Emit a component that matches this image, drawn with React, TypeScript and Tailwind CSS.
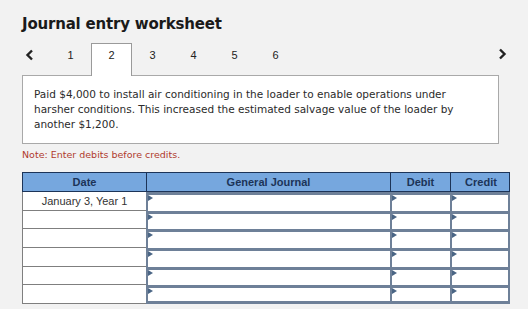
const tabs = [1, 2, 3, 4, 5, 6];
const rows = ['January 3, Year 1', '', '', '', '', ''];

const Arrow = () => (
  <span className="absolute left-0 top-0 w-0 h-0 border-y-[3px] border-y-transparent border-l-[5px] border-l-[#4a6585]"></span>
);

const InputCell = ({ last, right }: { last: boolean; right?: boolean }) => (
  <div
    className={`relative bg-white border-t-[3px] border-l-[2px] border-[#6e8098] ${last ? 'border-b-[3px]' : ''} ${right ? 'border-r-[2px]' : ''}`}
  >
    <Arrow />
  </div>
);

export default function App() {
  return (
    <div className="min-h-screen w-[528px] bg-[#f2f2f2] font-['DejaVu_Sans',Verdana,sans-serif] text-[#222]">
      <div className="pl-[22px] pt-[14px]">
        <h1 className="text-[15px] font-bold leading-[20px] text-[#1a1a1a] tracking-[-0.2px]">Journal entry worksheet</h1>

        {/* Tabs */}
        <div className="flex items-end h-[32px] mt-[9px] w-[476px] relative">
          <div className="w-[28px] h-[31px] flex items-start pt-[5px] pl-[3px]">
            <svg width="9" height="12" viewBox="0 0 9 12">
              <path d="M7 1.5 L2.5 6 L7 10.5" fill="none" stroke="#222" strokeWidth="2.4" />
            </svg>
          </div>
          {tabs.map(t => (
            <div
              key={t}
              className={`w-[41px] h-[32px] flex items-start justify-center pt-[4px] text-[11px] leading-[14px] font-['Liberation_Sans',Arial,sans-serif] ${t === 2 ? 'bg-white border border-b-0 border-[#9a9a9a] relative z-10 -mb-[1px] h-[33px]' : 'pt-[5px]'}`}
            >
              {t}
            </div>
          ))}
          <div className="flex-1"></div>
          <div className="absolute -right-[9px] top-0 h-[31px] flex items-start pt-[5px]">
            <svg width="9" height="12" viewBox="0 0 9 12">
              <path d="M2 1.5 L6.5 6 L2 10.5" fill="none" stroke="#222" strokeWidth="2.4" />
            </svg>
          </div>
        </div>

        {/* Question box */}
        <div className="w-[477px] h-[69px] bg-white border border-[#a9a9a9] px-[11px] pt-[11px] text-[10.5px] leading-[15px] text-[#2b2b2b]">
          Paid $4,000 to install air conditioning in the loader to enable operations under harsher conditions. This increased the estimated salvage value of the loader by another $1,200.
        </div>

        <div className="mt-[4px] text-[9.5px] leading-[14px] text-[#b03a2e]">Note: Enter debits before credits.</div>

        {/* Table */}
        <div className="mt-[10px] w-[488px] font-['Liberation_Sans',Arial,sans-serif]">
          <div className="grid grid-cols-[124px_244px_60px_60px] h-[20px] bg-[#76a7de] border border-[#1c3458] text-[11px] font-bold text-[#1c3458]">
            <div className="flex items-center justify-center border-r border-[#1c3458]">Date</div>
            <div className="flex items-center justify-center border-r border-[#1c3458]">General Journal</div>
            <div className="flex items-center justify-center border-r border-[#1c3458]">Debit</div>
            <div className="flex items-center justify-center">Credit</div>
          </div>
          <div className="grid grid-cols-[124px_244px_60px_60px] grid-rows-6 h-[112px]">
            {rows.map((d, i) => {
              const last = i === rows.length - 1;
              return [
                <div
                  key={`d${i}`}
                  className="bg-white border-l border-b border-[#7f7f7f] flex items-center justify-center text-[11px] text-[#333]"
                >
                  {d}
                </div>,
                <InputCell key={`g${i}`} last={last} />,
                <InputCell key={`db${i}`} last={last} />,
                <InputCell key={`c${i}`} last={last} right />,
              ];
            })}
          </div>
        </div>
      </div>
    </div>
  );
}
